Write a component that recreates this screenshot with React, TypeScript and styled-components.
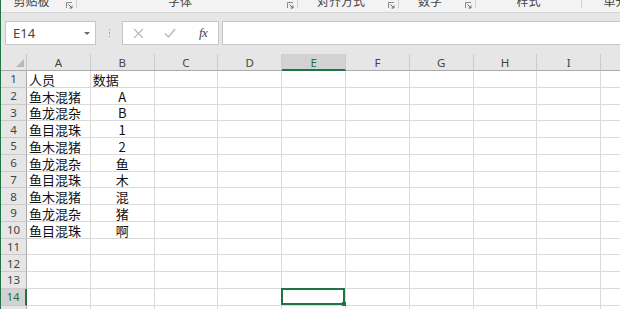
import React from "react";
import styled, { createGlobalStyle } from "styled-components";

const GlobalStyle = createGlobalStyle`
  body {
    margin: 0;
    background: #e6e6e6;
    overflow: hidden;
  }
`;

const groups = [
  { label: "剪贴板", width: 76, launcher: true },
  { label: "字体", width: 221, launcher: true },
  { label: "对齐方式", width: 101, launcher: true },
  { label: "数字", width: 77, launcher: true },
  { label: "样式", width: 106, launcher: false },
  { label: "单元格", width: 80, launcher: false },
];

const columns = ["A", "B", "C", "D", "E", "F", "G", "H", "I", "J"];

const cellData: { a: string; b: string; bAlign: "left" | "center" }[] = [
  { a: "人员", b: "数据", bAlign: "left" },
  { a: "鱼木混猪", b: "A", bAlign: "center" },
  { a: "鱼龙混杂", b: "B", bAlign: "center" },
  { a: "鱼目混珠", b: "1", bAlign: "center" },
  { a: "鱼木混猪", b: "2", bAlign: "center" },
  { a: "鱼龙混杂", b: "鱼", bAlign: "center" },
  { a: "鱼目混珠", b: "木", bAlign: "center" },
  { a: "鱼木混猪", b: "混", bAlign: "center" },
  { a: "鱼龙混杂", b: "猪", bAlign: "center" },
  { a: "鱼目混珠", b: "啊", bAlign: "center" },
];

const ROW_COUNT = 15;
const SELECTED_ROW = 14;
const SELECTED_COL = "E";

const Window = styled.div`
  width: 620px;
  height: 309px;
  overflow: hidden;
  box-sizing: border-box;
  border-left: 1px solid #217346;
  background: #e6e6e6;
  display: flex;
  flex-direction: column;
`;

const Ribbon = styled.div`
  height: 13px;
  flex: none;
  box-sizing: border-box;
  background: #f3f3f3;
  border-bottom: 1px solid #d5d5d5;
  display: flex;
  overflow: hidden;
`;

const RibbonGroup = styled.div<{ $w: number }>`
  width: ${(p) => p.$w}px;
  flex: none;
  height: 8px;
  box-sizing: border-box;
  border-right: 1px solid #d2d2d2;
  display: flex;
`;

const GroupLabel = styled.div`
  flex: 1;
  text-align: center;
  font-family: "Noto Sans CJK SC", sans-serif;
  font-size: 12px;
  line-height: 12px;
  margin-top: -5px;
  color: #444;
  white-space: nowrap;
`;

const LauncherSlot = styled.div`
  width: 14px;
  flex: none;
  display: flex;
  justify-content: flex-end;
  padding: 2px 3px 0 0;
  box-sizing: border-box;
`;

const FormulaBar = styled.div`
  height: 41px;
  flex: none;
  box-sizing: border-box;
  padding: 8px 0 9px 4px;
  display: flex;
  align-items: stretch;
`;

const NameBox = styled.div`
  width: 91px;
  flex: none;
  box-sizing: border-box;
  background: #fff;
  border: 1px solid #c6c6c6;
  display: flex;
  align-items: center;
  justify-content: space-between;
  padding: 0 5px 0 7px;
  font-family: "Noto Sans", sans-serif;
  font-size: 13px;
  color: #444;
`;

const DropArrow = styled.span`
  width: 0;
  height: 0;
  border-left: 3.5px solid transparent;
  border-right: 3.5px solid transparent;
  border-top: 3.5px solid #6a6a6a;
`;

const Grip = styled.div`
  width: 26px;
  flex: none;
  display: flex;
  flex-direction: column;
  align-items: center;
  justify-content: center;
  gap: 2px;
`;

const GripDot = styled.span`
  width: 1px;
  height: 1.5px;
  background: #9a9a9a;
`;

const FxButtons = styled.div`
  width: 97px;
  flex: none;
  box-sizing: border-box;
  background: #fff;
  border: 1px solid #c6c6c6;
  display: grid;
  grid-template-columns: repeat(3, 1fr);
  align-items: center;
  justify-items: center;
`;

const FxLabel = styled.span`
  font-family: "Liberation Serif", serif;
  font-style: italic;
  font-size: 13px;
  color: #444;
  letter-spacing: -0.5px;
  margin-left: 2px;
`;

const FormulaInput = styled.div`
  flex: 1;
  margin-left: 3px;
  margin-right: -4px;
  background: #fff;
  border: 1px solid #c6c6c6;
`;

const Sheet = styled.div`
  display: grid;
  grid-template-columns: 26px repeat(10, 63.8px);
  grid-template-rows: 17px repeat(${ROW_COUNT}, 16.76px);
  background: #fff;
`;

const Corner = styled.div`
  background: #e6e6e6;
  box-sizing: border-box;
  border-right: 1px solid #c8c8c8;
  border-bottom: 1px solid #ababab;
  display: flex;
  align-items: flex-end;
  justify-content: flex-end;
  padding: 0 2px 3px 0;
`;

const ColHead = styled.div<{ $active?: boolean }>`
  box-sizing: border-box;
  background: ${(p) => (p.$active ? "#d2d2d2" : "#e6e6e6")};
  color: ${(p) => (p.$active ? "#217346" : "#444")};
  border-right: 1px solid #cbcbcb;
  border-bottom: ${(p) => (p.$active ? "2px solid #217346" : "1px solid #ababab")};
  display: flex;
  align-items: center;
  justify-content: center;
  font-family: "Noto Sans", sans-serif;
  font-size: 11.5px;
  padding-top: ${(p) => (p.$active ? "1px" : "0")};
`;

const RowHead = styled.div<{ $active?: boolean }>`
  box-sizing: border-box;
  background: ${(p) => (p.$active ? "#d2d2d2" : "#e6e6e6")};
  color: ${(p) => (p.$active ? "#217346" : "#444")};
  border-right: ${(p) => (p.$active ? "2px solid #217346" : "1px solid #ababab")};
  border-bottom: 1px solid #cbcbcb;
  display: flex;
  align-items: flex-end;
  justify-content: center;
  font-family: "Noto Sans", sans-serif;
  font-size: 11.5px;
  line-height: 1;
  padding-bottom: 2px;
`;

const Cell = styled.div<{ $align?: "left" | "center"; $selected?: boolean }>`
  position: relative;
  box-sizing: border-box;
  border-right: 1px solid #dadada;
  border-bottom: 1px solid #dadada;
  display: flex;
  align-items: flex-end;
  justify-content: ${(p) => (p.$align === "center" ? "center" : "flex-start")};
  padding: 0 2px 1px 2px;
  font-family: "Noto Sans CJK SC", sans-serif;
  font-size: 13px;
  line-height: 1;
  color: #111;
  white-space: nowrap;
  z-index: ${(p) => (p.$selected ? 2 : "auto")};

  ${(p) =>
    p.$selected &&
    `
    &::after {
      content: "";
      position: absolute;
      left: -1.5px;
      top: -0.5px;
      right: 0;
      bottom: -0.5px;
      border: 2px solid #217346;
    }
    &::before {
      content: "";
      position: absolute;
      right: -1.5px;
      bottom: -1.5px;
      width: 4px;
      height: 4px;
      background: #217346;
      z-index: 3;
    }
  `}
`;

const Launcher = () => (
  <svg width="7" height="7" viewBox="0 0 7 7">
    <path d="M0.5 6V0.5H6" fill="none" stroke="#8a8a8a" strokeWidth="1" />
    <path d="M2.5 2.5L6 6M6 3.5V6H3.5" fill="none" stroke="#6a6a6a" strokeWidth="1" />
  </svg>
);

const CancelIcon = () => (
  <svg width="11" height="11" viewBox="0 0 11 11">
    <path d="M1 1L10 10M10 1L1 10" stroke="#b9b9b9" strokeWidth="1.2" fill="none" />
  </svg>
);

const EnterIcon = () => (
  <svg width="12" height="10" viewBox="0 0 12 10">
    <path d="M1 5.5L4.5 9L11 1" stroke="#b9b9b9" strokeWidth="1.4" fill="none" />
  </svg>
);

const SelectAll = () => (
  <svg width="8" height="8" viewBox="0 0 8 8">
    <path d="M8 0V8H0Z" fill="#b8b8b8" />
  </svg>
);

const App = () => {
  return (
    <>
      <GlobalStyle />
      <Window>
        <Ribbon>
          {groups.map((g) => (
            <RibbonGroup key={g.label} $w={g.width}>
              <GroupLabel>{g.label}</GroupLabel>
              {g.launcher && (
                <LauncherSlot>
                  <Launcher />
                </LauncherSlot>
              )}
            </RibbonGroup>
          ))}
        </Ribbon>

        <FormulaBar>
          <NameBox>
            E14
            <DropArrow />
          </NameBox>
          <Grip>
            <GripDot />
            <GripDot />
            <GripDot />
          </Grip>
          <FxButtons>
            <CancelIcon />
            <EnterIcon />
            <FxLabel>fx</FxLabel>
          </FxButtons>
          <FormulaInput />
        </FormulaBar>

        <Sheet>
          <Corner>
            <SelectAll />
          </Corner>
          {columns.map((c) => (
            <ColHead key={c} $active={c === SELECTED_COL}>
              {c}
            </ColHead>
          ))}
          {Array.from({ length: ROW_COUNT }, (_, i) => {
            const row = i + 1;
            const data = cellData[i];
            return (
              <React.Fragment key={row}>
                <RowHead $active={row === SELECTED_ROW}>{row}</RowHead>
                {columns.map((c) => {
                  let text = "";
                  let align: "left" | "center" = "left";
                  if (data && c === "A") text = data.a;
                  if (data && c === "B") {
                    text = data.b;
                    align = data.bAlign;
                  }
                  return (
                    <Cell
                      key={c}
                      $align={align}
                      $selected={row === SELECTED_ROW && c === SELECTED_COL}
                    >
                      {text}
                    </Cell>
                  );
                })}
              </React.Fragment>
            );
          })}
        </Sheet>
      </Window>
    </>
  );
};

export default App;
